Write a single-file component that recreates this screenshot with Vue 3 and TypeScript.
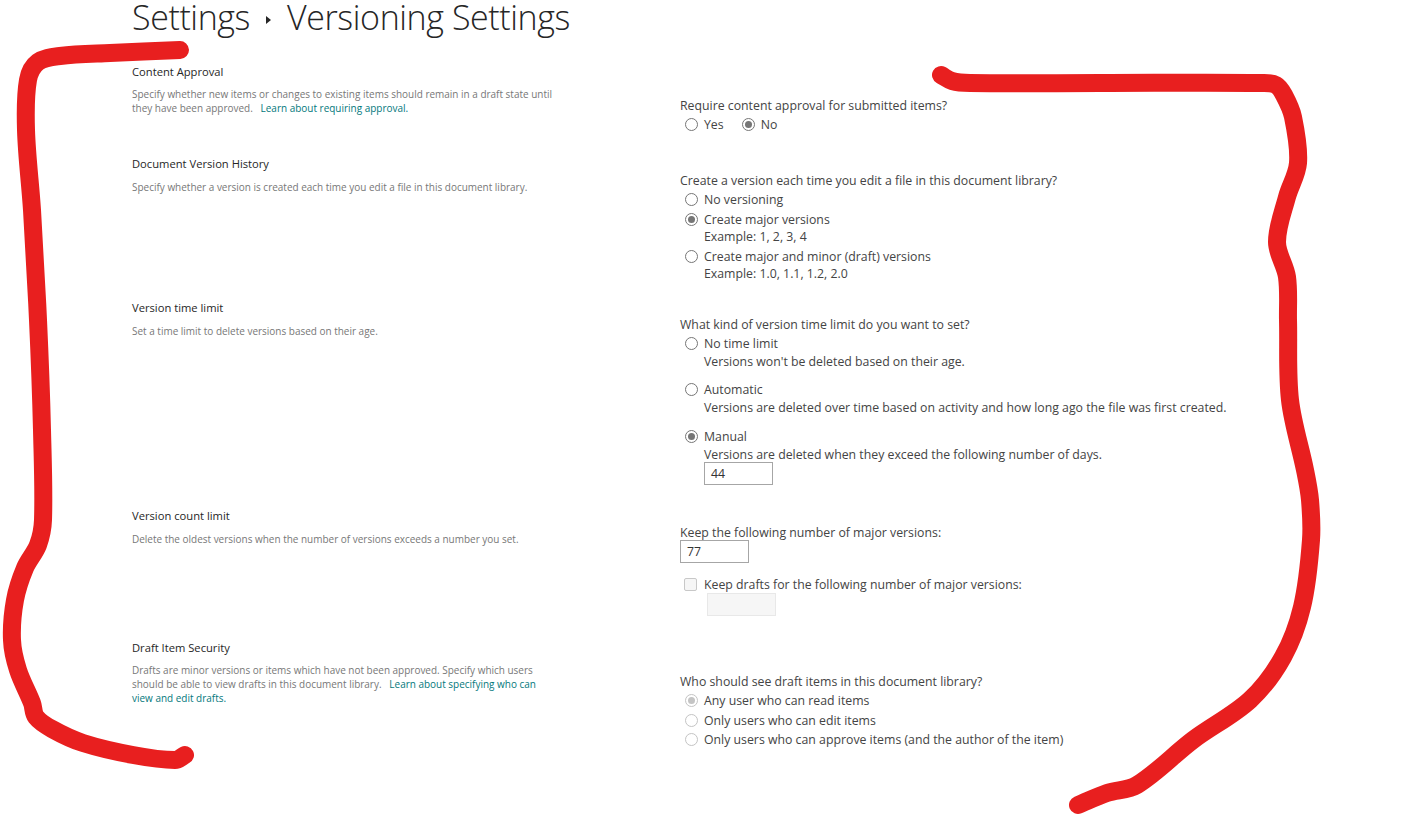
<script setup lang="ts">
type Pt = [number, number]

const leftStroke: Pt[] = [[180,50],[110,53],[60,56],[38,62],[28,80],[26,130],[32,210],[38,320],[42,430],[43,520],[38,545],[25,568],[15,600],[12,640],[18,670],[32,703],[36,717],[52,729],[83,743],[133,755],[175,760],[185,755]]
const rightStroke: Pt[] = [[941,75],[952,81],[970,83],[1100,83],[1262,83],[1276,85],[1284,95],[1293,117],[1298,163],[1287,197],[1277,242],[1287,277],[1288,320],[1290,400],[1305,470],[1310,500],[1311,540],[1302,607],[1283,657],[1250,700],[1193,740],[1137,785],[1107,793],[1078,805]]

function smooth(p: Pt[]): string {
  const dist = (a: Pt, b: Pt) => Math.hypot(b[0] - a[0], b[1] - a[1])
  const tangent = (i: number): Pt => {
    const a = p[Math.max(i - 1, 0)], c = p[Math.min(i + 1, p.length - 1)]
    const len = dist(a, c) || 1
    return [(c[0] - a[0]) / len, (c[1] - a[1]) / len]
  }
  let d = `M${p[0][0]} ${p[0][1]}`
  for (let i = 0; i < p.length - 1; i++) {
    const b = p[i], c = p[i + 1], k = dist(b, c) / 3
    const t0 = tangent(i), t1 = tangent(i + 1)
    d += ` C${(b[0] + t0[0] * k).toFixed(1)} ${(b[1] + t0[1] * k).toFixed(1)} ${(c[0] - t1[0] * k).toFixed(1)} ${(c[1] - t1[1] * k).toFixed(1)} ${c[0]} ${c[1]}`
  }
  return d
}
const strokes = [smooth(leftStroke), smooth(rightStroke)]
</script>

<template>
  <main class="page">
    <h1 class="title">
      <span>Settings</span>
      <i class="chevron"></i>
      <span>Versioning Settings</span>
    </h1>

    <section class="row row-approval">
      <div class="info">
        <h2>Content Approval</h2>
        <p>Specify whether new items or changes to existing items should remain in a draft state until they have been approved. &nbsp; <a>Learn about requiring approval.</a></p>
      </div>
      <div class="form">
        <div class="q">Require content approval for submitted items?</div>
        <div class="inline">
          <label class="opt"><span class="radio"></span>Yes</label>
          <label class="opt"><span class="radio on"></span>No</label>
        </div>
      </div>
    </section>

    <section class="row row-history">
      <div class="info">
        <h2>Document Version History</h2>
        <p>Specify whether a version is created each time you edit a file in this document library.</p>
      </div>
      <div class="form">
        <div class="q">Create a version each time you edit a file in this document library?</div>
        <label class="opt"><span class="radio"></span>No versioning</label>
        <label class="opt"><span class="radio on"></span>Create major versions</label>
        <div class="sub">Example: 1, 2, 3, 4</div>
        <label class="opt"><span class="radio"></span>Create major and minor (draft) versions</label>
        <div class="sub">Example: 1.0, 1.1, 1.2, 2.0</div>
      </div>
    </section>

    <section class="row row-time">
      <div class="info">
        <h2>Version time limit</h2>
        <p>Set a time limit to delete versions based on their age.</p>
      </div>
      <div class="form">
        <div class="q">What kind of version time limit do you want to set?</div>
        <label class="opt"><span class="radio"></span>No time limit</label>
        <div class="sub gap">Versions won't be deleted based on their age.</div>
        <label class="opt"><span class="radio"></span>Automatic</label>
        <div class="sub gap">Versions are deleted over time based on activity and how long ago the file was first created.</div>
        <label class="opt"><span class="radio on"></span>Manual</label>
        <div class="sub short">Versions are deleted when they exceed the following number of days.</div>
        <div class="field indented">44</div>
      </div>
    </section>

    <section class="row row-count">
      <div class="info">
        <h2>Version count limit</h2>
        <p>Delete the oldest versions when the number of versions exceeds a number you set.</p>
      </div>
      <div class="form">
        <div class="q tight">Keep the following number of major versions:</div>
        <div class="field">77</div>
        <label class="opt check-opt"><span class="check"></span>Keep drafts for the following number of major versions:</label>
        <div class="field disabled"></div>
      </div>
    </section>

    <section class="row row-draft">
      <div class="info">
        <h2>Draft Item Security</h2>
        <p>Drafts are minor versions or items which have not been approved. Specify which users should be able to view drafts in this document library. &nbsp; <a>Learn about specifying who can view and edit drafts.</a></p>
      </div>
      <div class="form">
        <div class="q">Who should see draft items in this document library?</div>
        <label class="opt"><span class="radio off on"></span>Any user who can read items</label>
        <label class="opt"><span class="radio off"></span>Only users who can edit items</label>
        <label class="opt"><span class="radio off"></span>Only users who can approve items (and the author of the item)</label>
      </div>
    </section>

    <svg class="ink" viewBox="0 0 1405 815" width="1405" height="815" aria-hidden="true">
      <path v-for="d in strokes" :key="d" :d="d" />
    </svg>
  </main>
</template>

<style>
html, body { background: #fff; overflow: hidden; }
</style>

<style scoped>
.page {
  position: relative;
  width: 1405px;
  height: 815px;
  overflow: hidden;
  padding-left: 132px;
  box-sizing: border-box;
  font-family: "Open Sans", "Liberation Sans", sans-serif;
  color: #444;
}
.title {
  display: flex;
  align-items: center;
  height: 36px;
  margin: -1px 0 29px;
  font-size: 34px;
  letter-spacing: -0.4px;
  line-height: 36px;
  font-weight: 300;
  color: #262626;
  white-space: nowrap;
}
.chevron {
  width: 0;
  height: 0;
  margin: 5px 16px 0 16px;
  border-left: 5px solid #262626;
  border-top: 4px solid transparent;
  border-bottom: 4px solid transparent;
}
.row {
  display: grid;
  grid-template-columns: 548px 1fr;
}
.row-approval { height: 92px; }
.row-history { height: 144px; }
.row-time { height: 208px; }
.row-count { height: 132px; }
.info { width: 422px; }
.row-draft .info { width: 410px; }
h2 {
  margin: 0 0 7px;
  font-size: 11.2px;
  line-height: 16px;
  font-weight: 400;
  color: #262626;
}
p {
  margin: 0;
  font-size: 9.97px;
  line-height: 14px;
  color: #777;
}
.row-history p, .row-time p, .row-count p { margin-top: 8px; }
a { color: #03787c; }
.form {
  padding-top: 14px;
  font-size: 12.3px;
}
.row-approval .form, .row-draft .form { padding-top: 31px; }
.q { height: 20px; line-height: 22px; }
.q.tight { height: 18px; line-height: 22px; }
.opt {
  display: flex;
  align-items: center;
  height: 19.5px;
  line-height: 19px;
  white-space: nowrap;
}
.inline { display: flex; gap: 18px; padding-left: 5px; }
.form > .opt { padding-left: 5px; }
.sub {
  padding-left: 24px;
  height: 17.5px;
  line-height: 15px;
  white-space: nowrap;
}
.sub.gap { height: 26.5px; }
.sub.gap + .opt + .sub.gap { height: 27.5px; }
.sub.short { height: 15px; }
.radio {
  position: relative;
  flex: none;
  width: 13px;
  height: 13px;
  margin-right: 6px;
  border: 1px solid #767676;
  border-radius: 50%;
  box-sizing: border-box;
  background: #fff;
}
.radio.on::after {
  content: "";
  position: absolute;
  inset: 2px;
  border-radius: 50%;
  background: #767676;
}
.radio.off { border-color: #c4c4c4; }
.radio.off.on::after { background: #c4c4c4; }
.field {
  width: 69px;
  height: 23px;
  box-sizing: border-box;
  border: 1px solid #a6a6a6;
  padding-left: 6px;
  line-height: 21px;
  color: #333;
}
.field.indented { margin-left: 24px; }
.check-opt { margin-top: 11.5px; padding-left: 4px !important; }
.check {
  flex: none;
  width: 13px;
  height: 13px;
  margin-right: 7px;
  box-sizing: border-box;
  border: 1px solid #c8c8c8;
  border-radius: 2px;
  background: #f6f6f6;
}
.field.disabled {
  margin: -1px 0 0 27px;
  background: #f6f6f6;
  border-color: #e8e8e8;
}
.ink {
  position: absolute;
  left: 0;
  top: 0;
  pointer-events: none;
}
.ink path {
  fill: none;
  stroke: #e81f1f;
  stroke-width: 18;
  stroke-linecap: round;
  stroke-linejoin: round;
}
</style>
